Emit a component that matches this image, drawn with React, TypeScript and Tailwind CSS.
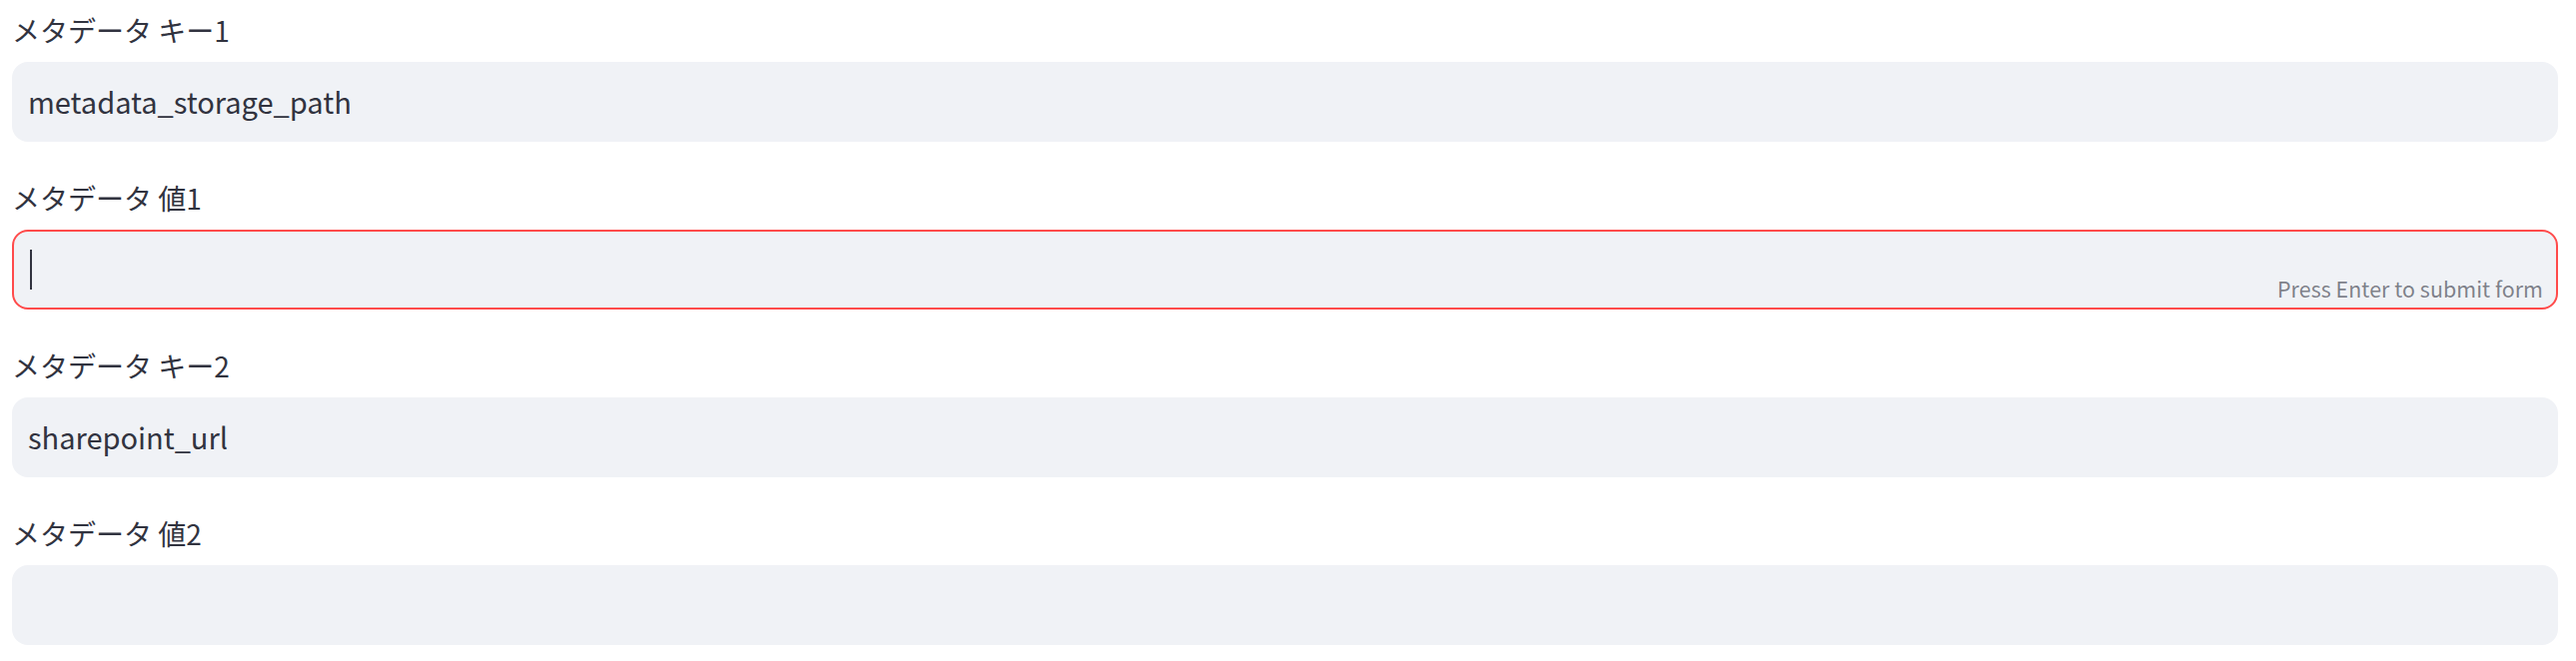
import React from 'react';

const font = { fontFamily: '"Noto Sans CJK JP", "Noto Sans", sans-serif' };

type Field = { label: string; value: string; focused?: boolean };

const fields: Field[] = [
  { label: 'メタデータ キー1', value: 'metadata_storage_path' },
  { label: 'メタデータ 値1', value: '', focused: true },
  { label: 'メタデータ キー2', value: 'sharepoint_url' },
  { label: 'メタデータ 値2', value: '' },
];

const TextField = ({ label, value, focused }: Field) => (
  <div className="flex flex-col">
    <label className="h-[48px] mb-[8px] flex items-center text-[28px] text-[#31333f]">{label}</label>
    {focused ? (
      <div className="relative h-[80px] rounded-[16px] border-2 border-[#ff4b4b] bg-[#f0f2f6] flex items-center pl-[16px]">
        <span className="block w-[2px] h-[40px] bg-[#31333f]" />
        <div className="absolute right-[13px] bottom-[9px] text-[21.5px] leading-none text-[#31333f]/60">
          Press Enter to submit form
        </div>
      </div>
    ) : (
      <input
        readOnly
        value={value}
        style={font}
        className="h-[80px] w-full rounded-[16px] border-2 border-[#f0f2f6] bg-[#f0f2f6] px-[14px] pb-[2px] text-[29px] text-[#31333f] outline-none"
      />
    )}
  </div>
);

export default function App() {
  return (
    <div style={font} className="w-[2578px] h-[662px] bg-white pt-[6px] pl-[12px] pr-[18px] flex flex-col gap-[32px]">
      {fields.map((f) => (
        <TextField key={f.label} {...f} />
      ))}
    </div>
  );
}
